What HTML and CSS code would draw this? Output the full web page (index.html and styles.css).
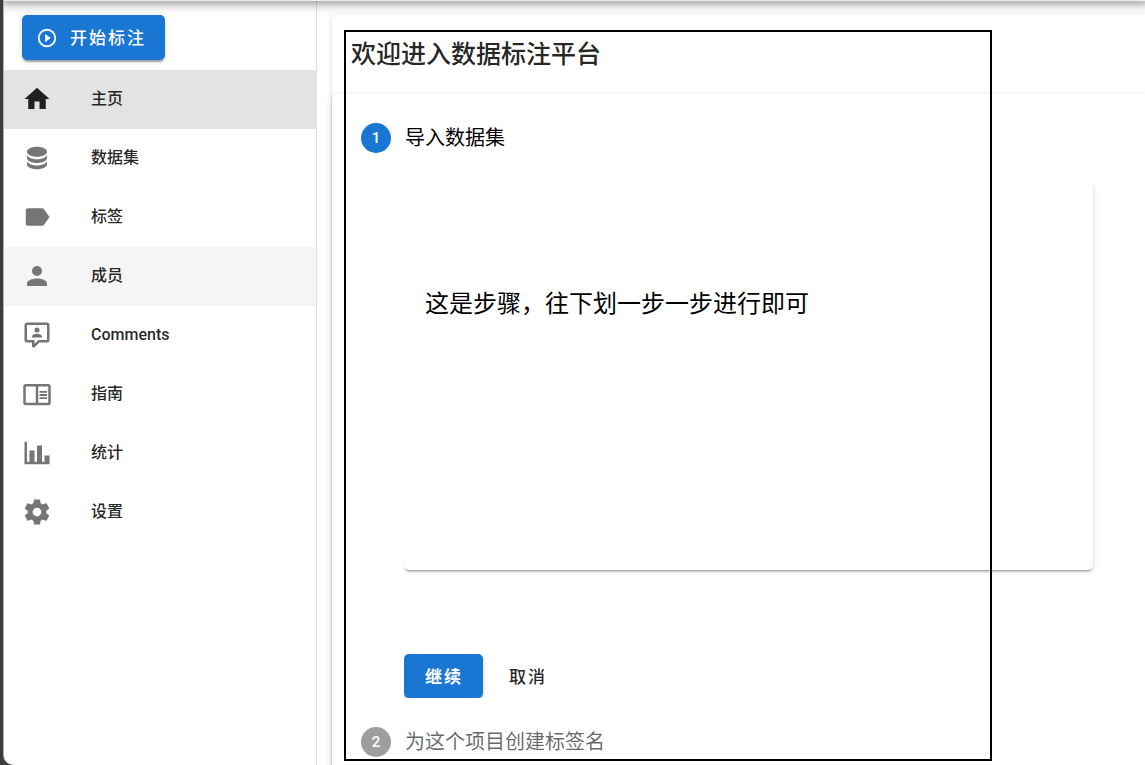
FILE: index.html
```html
<!DOCTYPE html>
<html lang="zh-CN">
<head>
<meta charset="utf-8">
<meta name="viewport" content="width=device-width, initial-scale=1">
<title>数据标注平台</title>
<link rel="stylesheet" href="styles.css">
</head>
<body>
<div class="app">
  <header class="app-bar"></header>
  <div class="layout">
    <aside class="sidebar">
      <button class="btn btn-primary btn-start" type="button">
        <svg class="btn-icon" viewBox="0 0 24 24" aria-hidden="true"><path d="M12,20C7.59,20 4,16.41 4,12C4,7.59 7.59,4 12,4C16.41,4 20,7.59 20,12C20,16.41 16.41,20 12,20M12,2A10,10 0 0,0 2,12A10,10 0 0,0 12,22A10,10 0 0,0 22,12A10,10 0 0,0 12,2M10,16.5L16,12L10,7.5V16.5Z"/></svg>
        <span>开始标注</span>
      </button>
      <nav class="nav">
        <a class="nav-item is-active" href="#home">
          <svg class="nav-icon" viewBox="0 0 24 24" aria-hidden="true"><path d="M10,20V14H14V20H19V12H22L12,3L2,12H5V20H10Z"/></svg>
          <span>主页</span>
        </a>
        <a class="nav-item" href="#dataset">
          <svg class="nav-icon" viewBox="0 0 24 24" aria-hidden="true"><path d="M12,3C7.58,3 4,4.79 4,7C4,9.21 7.58,11 12,11C16.42,11 20,9.21 20,7C20,4.79 16.42,3 12,3M4,9V12C4,14.21 7.58,16 12,16C16.42,16 20,14.21 20,12V9C20,11.21 16.42,13 12,13C7.58,13 4,11.21 4,9M4,14V17C4,19.21 7.58,21 12,21C16.42,21 20,19.21 20,17V14C20,16.21 16.42,18 12,18C7.58,18 4,16.21 4,14Z"/></svg>
          <span>数据集</span>
        </a>
        <a class="nav-item" href="#labels">
          <svg class="nav-icon" viewBox="0 0 24 24" aria-hidden="true"><path d="M17.63,5.84C17.27,5.33 16.67,5 16,5H5A2,2 0 0,0 3,7V17A2,2 0 0,0 5,19H16C16.67,19 17.27,18.66 17.63,18.15L22,12L17.63,5.84Z"/></svg>
          <span>标签</span>
        </a>
        <a class="nav-item is-hovered" href="#members">
          <svg class="nav-icon" viewBox="0 0 24 24" aria-hidden="true"><path d="M12,4A4,4 0 0,1 16,8A4,4 0 0,1 12,12A4,4 0 0,1 8,8A4,4 0 0,1 12,4M12,14C16.42,14 20,15.79 20,18V20H4V18C4,15.79 7.58,14 12,14Z"/></svg>
          <span>成员</span>
        </a>
        <a class="nav-item" href="#comments">
          <svg class="nav-icon" viewBox="0 0 24 24" aria-hidden="true"><path d="M9,22A1,1 0 0,1 8,21V18H4A2,2 0 0,1 2,16V4C2,2.89 2.9,2 4,2H20A2,2 0 0,1 22,4V16A2,2 0 0,1 20,18H13.9L10.2,21.71C10,21.9 9.75,22 9.5,22H9M10,16V19.08L13.08,16H20V4H4V16H10M16,14H8V13C8,11.67 10.67,11 12,11C13.33,11 16,11.67 16,13V14M12,6A2,2 0 0,1 14,8A2,2 0 0,1 12,10A2,2 0 0,1 10,8A2,2 0 0,1 12,6Z"/></svg>
          <span>Comments</span>
        </a>
        <a class="nav-item" href="#guide">
          <svg class="nav-icon" viewBox="0 0 24 24" aria-hidden="true"><path d="M21,4H3A2,2 0 0,0 1,6V19A2,2 0 0,0 3,21H21A2,2 0 0,0 23,19V6A2,2 0 0,0 21,4M3,19V6H11V19H3M21,19H13V6H21V19M14,9.5H20V11H14V9.5M14,12H20V13.5H14V12M14,14.5H20V16H14V14.5Z"/></svg>
          <span>指南</span>
        </a>
        <a class="nav-item" href="#stats">
          <svg class="nav-icon" viewBox="0 0 24 24" aria-hidden="true"><path d="M22,21H2V3H4V19H6V10H10V19H12V6H16V19H18V14H22V21Z"/></svg>
          <span>统计</span>
        </a>
        <a class="nav-item" href="#settings">
          <svg class="nav-icon" viewBox="0 0 24 24" aria-hidden="true"><path d="M12,15.5A3.5,3.5 0 0,1 8.5,12A3.5,3.5 0 0,1 12,8.5A3.5,3.5 0 0,1 15.5,12A3.5,3.5 0 0,1 12,15.5M19.43,12.97C19.47,12.65 19.5,12.33 19.5,12C19.5,11.67 19.47,11.34 19.43,11L21.54,9.37C21.73,9.22 21.78,8.95 21.66,8.73L19.66,5.27C19.54,5.05 19.27,4.96 19.05,5.05L16.56,6.05C16.04,5.66 15.5,5.32 14.87,5.07L14.5,2.42C14.46,2.18 14.25,2 14,2H10C9.75,2 9.54,2.18 9.5,2.42L9.13,5.07C8.5,5.32 7.96,5.66 7.44,6.05L4.95,5.05C4.73,4.96 4.46,5.05 4.34,5.27L2.34,8.73C2.21,8.95 2.27,9.22 2.46,9.37L4.57,11C4.53,11.34 4.5,11.67 4.5,12C4.5,12.33 4.53,12.65 4.57,12.97L2.46,14.63C2.27,14.78 2.21,15.05 2.34,15.27L4.34,18.73C4.46,18.95 4.73,19.03 4.95,18.95L7.44,17.94C7.96,18.34 8.5,18.68 9.13,18.93L9.5,21.58C9.54,21.82 9.75,22 10,22H14C14.25,22 14.46,21.82 14.5,21.58L14.87,18.93C15.5,18.67 16.04,18.34 16.56,17.94L19.05,18.95C19.27,19.03 19.54,18.95 19.66,18.73L21.66,15.27C21.78,15.05 21.73,14.78 21.54,14.63L19.43,12.97Z"/></svg>
          <span>设置</span>
        </a>
      </nav>
    </aside>
    <main class="content">
      <section class="card">
        <h1 class="card-title">欢迎进入数据标注平台</h1>
        <div class="stepper">
          <div class="step">
            <span class="step-badge is-current">1</span>
            <h2 class="step-label is-current">导入数据集</h2>
          </div>
          <div class="step-content">
            <div class="panel">
              <p class="note">这是步骤，往下划一步一步进行即可</p>
            </div>
            <div class="actions">
              <button class="btn btn-primary btn-continue" type="button">继续</button>
              <button class="btn btn-text" type="button">取消</button>
            </div>
          </div>
          <div class="step">
            <span class="step-badge">2</span>
            <h2 class="step-label">为这个项目创建标签名</h2>
          </div>
        </div>
      </section>
      <div class="frame"></div>
    </main>
  </div>
</div>
</body>
</html>
```
FILE: styles.css
```css
* {
  box-sizing: border-box;
}

body {
  margin: 0;
  padding-left: 3px;
  background: #3c3c3c;
  color: rgba(0, 0, 0, 0.87);
  font-family: Roboto, "Noto Sans CJK SC", sans-serif;
  font-size: 16px;
  line-height: 24px;
}

.app {
  display: flex;
  flex-direction: column;
  height: 100vh;
  overflow: hidden;
  background: #fff;
  border-left: 1px solid #b0b0b0;
  border-bottom-left-radius: 10px;
}

.app-bar {
  flex: none;
  position: relative;
  z-index: 2;
  height: 1px;
  background: #eef0ee;
  box-shadow: 0 0 6px 2px rgba(0, 0, 0, 0.3), 0 0 12px 4px rgba(0, 0, 0, 0.24);
}

.layout {
  display: flex;
  flex: 1;
  min-height: 0;
}

.sidebar {
  flex: none;
  width: 313px;
  padding-top: 14px;
  border-right: 1px solid #e0e0e0;
}

.btn {
  display: inline-flex;
  align-items: center;
  justify-content: center;
  height: 44px;
  padding: 1px 20px 0 21px;
  border: 0;
  border-radius: 5px;
  font-family: inherit;
  font-size: 17px;
  font-weight: 500;
  line-height: 24px;
  letter-spacing: 2px;
  cursor: pointer;
}

.btn-primary {
  background: #1976d2;
  color: #fff;
  box-shadow: 0 4px 1px -2px rgba(0, 0, 0, 0.2), 0 2px 2px 0 rgba(0, 0, 0, 0.14), 0 1px 6px 0 rgba(0, 0, 0, 0.12);
}

.btn-text {
  background: transparent;
  color: rgba(0, 0, 0, 0.87);
}

.btn-start {
  gap: 12px;
  height: 45px;
  margin: 0 18px 10px;
  padding: 1px 19px 0 14px;
}

.btn-continue {
  font-weight: 700;
  clip-path: inset(0 -8px 0 0);
}

.btn-icon {
  width: 22px;
  height: 22px;
  fill: currentColor;
}

.nav-item {
  display: flex;
  align-items: center;
  gap: 39px;
  height: 59px;
  padding: 0 18px 1px;
  color: rgba(0, 0, 0, 0.87);
  font-weight: 500;
  text-decoration: none;
}

.nav-item.is-active {
  background: #e3e3e3;
}

.nav-item.is-hovered {
  background: #f5f5f5;
}

.nav-icon {
  width: 30px;
  height: 30px;
  fill: #757575;
}

.is-active .nav-icon {
  fill: #212121;
}

.content {
  position: relative;
  flex: 1;
  min-width: 0;
  padding: 14px 0 0 15px;
}

.card {
  min-height: 100%;
  border-radius: 5px 0 0 0;
  box-shadow: 0 4px 1px -2px rgba(0, 0, 0, 0.2), 0 2px 2px 0 rgba(0, 0, 0, 0.14), 0 1px 6px 0 rgba(0, 0, 0, 0.12);
}

.card-title {
  margin: 0;
  padding: 20px 19px 19px;
  font-size: 25px;
  font-weight: 500;
  line-height: 40px;
}

.stepper {
  padding-top: 14px;
  min-height: 672px;
  border-radius: 5px 0 0 0;
  box-shadow: 0 4px 1px -2px rgba(0, 0, 0, 0.2), 0 2px 2px 0 rgba(0, 0, 0, 0.14), 0 1px 6px 0 rgba(0, 0, 0, 0.12);
}

.step {
  display: flex;
  align-items: center;
  gap: 14px;
  height: 60px;
  padding-left: 29px;
}

.step-badge {
  display: flex;
  align-items: center;
  justify-content: center;
  width: 30px;
  height: 30px;
  border-radius: 50%;
  background: #9e9e9e;
  color: #fff;
  font-size: 15px;
  font-weight: 500;
}

.step-badge.is-current {
  background: #1976d2;
}

.step-label {
  margin: 0;
  color: rgba(0, 0, 0, 0.6);
  font-size: 20px;
  font-weight: 400;
  line-height: 30px;
}

.step-label.is-current {
  color: #000;
}

.step-content {
  padding: 15px 52px 14px 72px;
}

.panel {
  height: 387px;
  padding: 103px 21px 0;
  border-radius: 5px;
  box-shadow: 0 3px 1px -2px rgba(0, 0, 0, 0.2), 0 2px 2px 0 rgba(0, 0, 0, 0.14), 0 1px 6px 0 rgba(0, 0, 0, 0.12);
  clip-path: inset(0 -8px -8px 0);
}

.note {
  margin: 0;
  color: #000;
  font-size: 24px;
  line-height: 36px;
}

.actions {
  display: flex;
  gap: 5px;
  margin-top: 84px;
}

/* Highlight frame drawn over the card */
.frame {
  position: absolute;
  top: 29px;
  right: 153px;
  bottom: 4px;
  left: 27px;
  border: 2px solid #000;
  pointer-events: none;
}
```
